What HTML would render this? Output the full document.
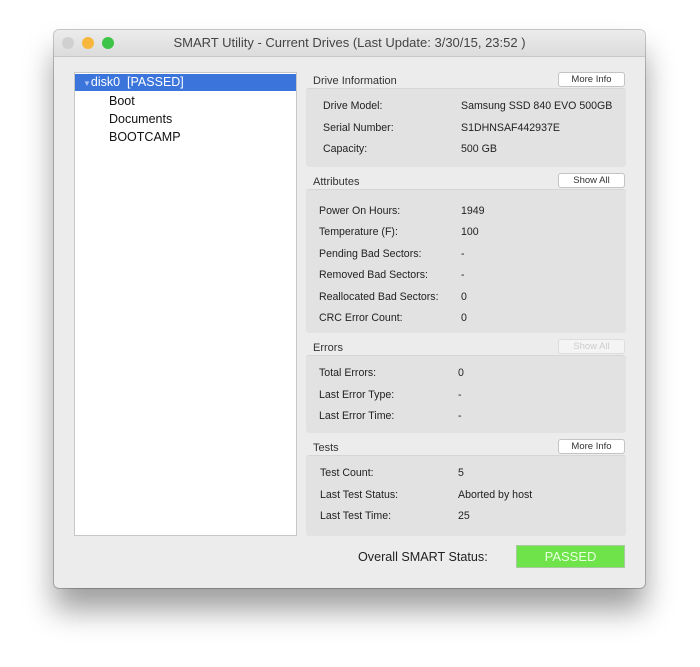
<!DOCTYPE html><html><head><style>
body{margin:0;width:700px;height:667px;background:#fff;font-family:"Liberation Sans",sans-serif;position:relative;overflow:hidden}
.a{position:absolute}
.win{left:54px;top:30px;width:591px;height:558px;background:#ececec;border-radius:5px;box-shadow:0 22px 30px rgba(0,0,0,.38),0 0 0 1px #c8c8c8}
.tb{left:0;top:0;width:591px;height:26px;background:linear-gradient(#ececec,#dcdcdc);border-bottom:1px solid #c9c9c9;border-radius:5px 5px 0 0;text-align:center;font-size:13px;line-height:26px;color:#444}
.dot{width:12px;height:12px;border-radius:50%;top:7px}
.list{left:74px;top:72px;width:223px;height:464px;background:#fff;border:1px solid #c6c6c6;box-sizing:border-box}
.it{font-size:12.5px;color:#111;position:absolute;left:34px}
.hd{font-size:11px;color:#333;left:313px}
.box{left:306px;width:320px;background:#e2e2e2;border-radius:3px;border-top:1px solid #d6d6d6}
.btn{left:558px;width:67px;height:15px;background:#fff;border:1px solid #c3c3c3;border-radius:3px;box-sizing:border-box;font-size:9.5px;text-align:center;line-height:13px;color:#333}
.l{font-size:10.6px;color:#222}
</style></head><body>
<div class="a win">
<div class="a tb">SMART Utility - Current Drives (Last Update: 3/30/15, 23:52 )</div>
<div class="a dot" style="left:8px;background:#d0d0d0;border:0"></div>
<div class="a dot" style="left:28px;background:#f6b73c"></div>
<div class="a dot" style="left:48px;background:#3ec547"></div>
</div>
<div class="a list">
<div class="a" style="left:0;top:1px;width:221px;height:17px;background:#3b74da"></div>
<div class="a" style="left:8px;top:2px;font-size:12.5px;color:#fff"><span style="font-size:8px;color:#a8c4f4">▼</span>disk0 &nbsp;[PASSED]</div>
<div class="it" style="top:21px">Boot</div>
<div class="it" style="top:39px">Documents</div>
<div class="it" style="top:57px">BOOTCAMP</div>
</div>

<div class="a hd" style="top:75px">Drive Information</div>
<div class="a btn" style="top:72px">More Info</div>
<div class="a box" style="top:88px;height:78px"></div>
<div class="a l" style="left:323px;top:100px">Drive Model:</div><div class="a l" style="left:461px;top:100px">Samsung SSD 840 EVO 500GB</div>
<div class="a l" style="left:323px;top:122px">Serial Number:</div><div class="a l" style="left:461px;top:122px">S1DHNSAF442937E</div>
<div class="a l" style="left:323px;top:143px">Capacity:</div><div class="a l" style="left:461px;top:143px">500 GB</div>

<div class="a hd" style="top:176px">Attributes</div>
<div class="a btn" style="top:173px">Show All</div>
<div class="a box" style="top:189px;height:143px"></div>
<div class="a l" style="left:319px;top:205px">Power On Hours:</div><div class="a l" style="left:461px;top:205px">1949</div>
<div class="a l" style="left:319px;top:226px">Temperature (F):</div><div class="a l" style="left:461px;top:226px">100</div>
<div class="a l" style="left:319px;top:248px">Pending Bad Sectors:</div><div class="a l" style="left:461px;top:248px">-</div>
<div class="a l" style="left:319px;top:269px">Removed Bad Sectors:</div><div class="a l" style="left:461px;top:269px">-</div>
<div class="a l" style="left:319px;top:291px">Reallocated Bad Sectors:</div><div class="a l" style="left:461px;top:291px">0</div>
<div class="a l" style="left:319px;top:312px">CRC Error Count:</div><div class="a l" style="left:461px;top:312px">0</div>

<div class="a hd" style="top:342px">Errors</div>
<div class="a btn" style="top:339px;color:#ccc;border-color:#ddd;background:#f4f4f4">Show All</div>
<div class="a box" style="top:355px;height:77px"></div>
<div class="a l" style="left:319px;top:367px">Total Errors:</div><div class="a l" style="left:458px;top:367px">0</div>
<div class="a l" style="left:319px;top:389px">Last Error Type:</div><div class="a l" style="left:458px;top:389px">-</div>
<div class="a l" style="left:319px;top:410px">Last Error Time:</div><div class="a l" style="left:458px;top:410px">-</div>

<div class="a hd" style="top:442px">Tests</div>
<div class="a btn" style="top:439px">More Info</div>
<div class="a box" style="top:455px;height:80px"></div>
<div class="a l" style="left:320px;top:467px">Test Count:</div><div class="a l" style="left:458px;top:467px">5</div>
<div class="a l" style="left:320px;top:489px">Last Test Status:</div><div class="a l" style="left:458px;top:489px">Aborted by host</div>
<div class="a l" style="left:320px;top:510px">Last Test Time:</div><div class="a l" style="left:458px;top:510px">25</div>

<div class="a" style="left:358px;top:550px;font-size:12.6px;color:#222">Overall SMART Status:</div>
<div class="a" style="left:516px;top:545px;width:109px;height:23px;background:#6ee44a;border:1px solid #a8c8a0;box-sizing:border-box;color:#e8ffe0;font-size:13px;text-align:center;line-height:21px">PASSED</div>
</body></html>
